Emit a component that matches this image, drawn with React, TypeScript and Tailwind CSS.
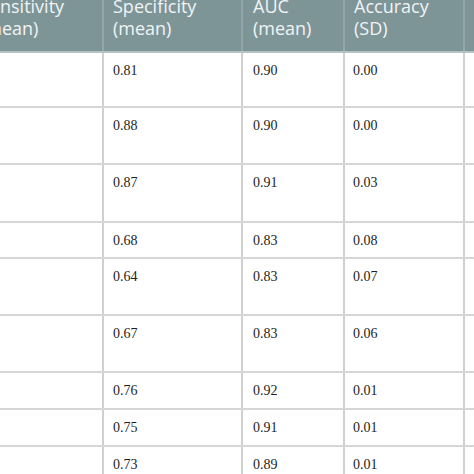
import React from "react";

const rows = [
  { h: "h-[55px]", spec: "0.81", auc: "0.90", sd: "0.00" },
  { h: "h-[57px]", spec: "0.88", auc: "0.90", sd: "0.00" },
  { h: "h-[58px]", spec: "0.87", auc: "0.91", sd: "0.03" },
  { h: "h-[36px]", spec: "0.68", auc: "0.83", sd: "0.08" },
  { h: "h-[57px]", spec: "0.64", auc: "0.83", sd: "0.07" },
  { h: "h-[57px]", spec: "0.67", auc: "0.83", sd: "0.06" },
  { h: "h-[37px]", spec: "0.76", auc: "0.92", sd: "0.01" },
  { h: "h-[37px]", spec: "0.75", auc: "0.91", sd: "0.01" },
  { h: "h-[57px]", spec: "0.73", auc: "0.89", sd: "0.01" },
];

const cols = "grid grid-cols-[134px_139px_102px_120px_60px]";

function HeadCell({ top, bottom, pad }: { top?: string; bottom?: string; pad: string }) {
  return (
    <div className={`border-r-2 border-[#93a7a9] ${pad}`}>
      <div className="-mt-[5px] leading-[22px]">
        <div>{top}</div>
        <div>{bottom}</div>
      </div>
    </div>
  );
}

export default function App() {
  return (
    <div className="w-[474px] h-[474px] overflow-hidden bg-white">
      <div className="-ml-[30px] w-[560px]">
        <div
          className={`${cols} h-[53px] bg-[#7e9598] border-b-2 border-[#b4c2c3] text-[18px] text-[#f1f4f4] overflow-hidden`}
          style={{ fontFamily: '"Open Sans", sans-serif' }}
        >
          <HeadCell top="Sensitivity" bottom="(mean)" pad="pl-[10px]" />
          <HeadCell top="Specificity" bottom="(mean)" pad="pl-[9px]" />
          <HeadCell top="AUC" bottom="(mean)" pad="pl-[10px]" />
          <HeadCell top="Accuracy" bottom="(SD)" pad="pl-[9px]" />
          <div />
        </div>
        {rows.map((r, i) => (
          <div
            key={i}
            className={`${cols} ${r.h} border-b-2 border-[#d6d6d6] text-[14px] leading-5 text-[#231f20]`}
            style={{ fontFamily: '"Liberation Serif", serif' }}
          >
            <div className="border-r-2 border-[#d0d0d0]" />
            <div className="border-r-2 border-[#d0d0d0] pl-[9px] pt-[8px]">{r.spec}</div>
            <div className="border-r-2 border-[#d0d0d0] pl-[10px] pt-[8px]">{r.auc}</div>
            <div className="border-r-2 border-[#d0d0d0] pl-[8px] pt-[8px]">{r.sd}</div>
            <div />
          </div>
        ))}
      </div>
    </div>
  );
}
